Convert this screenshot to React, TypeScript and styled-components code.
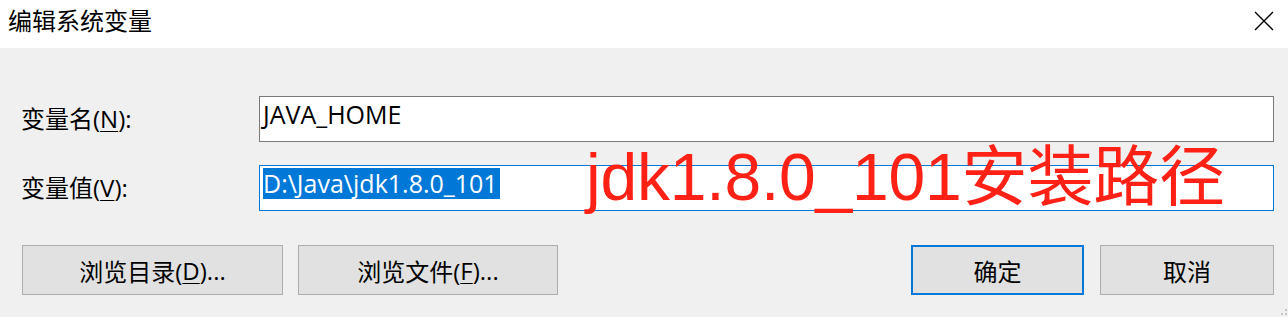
import styled, { createGlobalStyle } from "styled-components";

const GlobalStyle = createGlobalStyle`
  html, body {
    margin: 0;
    padding: 0;
    background: #f0f0f0;
  }
  body {
    font-family: "Open Sans", "Noto Sans CJK SC", sans-serif;
    color: #000;
  }
`;

const Dialog = styled.div`
  position: relative;
  width: 1288px;
  height: 317px;
  display: flex;
  flex-direction: column;
  background: #f0f0f0;
  overflow: hidden;
`;

const TitleBar = styled.div`
  height: 48px;
  box-sizing: border-box;
  padding: 0 14px 6px 8px;
  display: flex;
  align-items: center;
  justify-content: space-between;
  background: #ffffff;
`;

const Title = styled.span`
  font-size: 24px;
  line-height: 30px;
`;

const CloseButton = styled.div`
  width: 20px;
  height: 20px;
  display: flex;
`;

const Body = styled.div`
  flex: 1;
  display: flex;
  flex-direction: column;
  padding: 48px 14px 0 22px;
`;

const Fields = styled.div`
  display: grid;
  grid-template-columns: 237px 1fr;
  row-gap: 23px;
  align-items: center;
`;

const Label = styled.label`
  font-size: 24px;
  line-height: 30px;
  margin-left: -1px;

  u {
    text-decoration: underline;
    text-underline-offset: 3px;
    text-decoration-thickness: 1px;
  }
`;

const Field = styled.div<{ $focused?: boolean }>`
  height: 46px;
  box-sizing: border-box;
  border: 1px solid ${(p) => (p.$focused ? "#0078d7" : "#7a7a7a")};
  background: #ffffff;
  padding: 2px 3px;
  font-size: 25px;
  line-height: 31px;
  white-space: nowrap;
`;

const Selected = styled.span`
  display: inline-block;
  background: #0078d7;
  color: #ffffff;
  padding-right: 2px;
`;

const ButtonRow = styled.div`
  display: flex;
  margin-top: 34px;
`;

const Group = styled.div<{ $gap: number }>`
  display: flex;
  gap: ${(p) => p.$gap}px;
`;

const Spacer = styled.div`
  flex: 1;
`;

const Button = styled.button<{ $width: number; $default?: boolean }>`
  width: ${(p) => p.$width}px;
  height: 50px;
  box-sizing: border-box;
  border: ${(p) => (p.$default ? "2px solid #0078d7" : "1px solid #adadad")};
  background: #e1e1e1;
  font-family: "Open Sans", "Noto Sans CJK SC", sans-serif;
  font-size: 24px;
  color: #000;
  padding: 0;
  display: flex;
  align-items: center;
  justify-content: center;

  u {
    text-underline-offset: 3px;
    text-decoration-thickness: 1px;
  }
`;

const Note = styled.div`
  position: absolute;
  left: 586px;
  top: 144px;
  font-family: "Liberation Sans", "Noto Sans CJK SC", sans-serif;
  font-size: 66px;
  line-height: 66px;
  letter-spacing: -0.2px;
  color: #ff2016;
  white-space: nowrap;
  pointer-events: none;
`;

const Grip = styled.svg`
  position: absolute;
  right: 0;
  bottom: 0;
`;

const App = () => {
  return (
    <>
      <GlobalStyle />
      <Dialog>
        <TitleBar>
          <Title>编辑系统变量</Title>
          <CloseButton>
            <svg width="20" height="20" viewBox="0 0 20 20">
              <path d="M1 1 L19 19 M19 1 L1 19" stroke="#000" strokeWidth="1.4" fill="none" />
            </svg>
          </CloseButton>
        </TitleBar>
        <Body>
          <Fields>
            <Label>
              变量名(<u>N</u>):
            </Label>
            <Field>JAVA_HOME</Field>
            <Label>
              变量值(<u>V</u>):
            </Label>
            <Field $focused>
              <Selected>D:\Java\jdk1.8.0_101</Selected>
            </Field>
          </Fields>
          <ButtonRow>
            <Group $gap={15}>
              <Button $width={261}>
                浏览目录(<u>D</u>)...
              </Button>
              <Button $width={260}>
                浏览文件(<u>F</u>)...
              </Button>
            </Group>
            <Spacer />
            <Group $gap={16}>
              <Button $width={173} $default>
                确定
              </Button>
              <Button $width={174}>取消</Button>
            </Group>
          </ButtonRow>
        </Body>
        <Note>jdk1.8.0_101安装路径</Note>
        <Grip width="10" height="8" viewBox="0 0 10 8">
          <rect x="7" y="0" width="2" height="2" fill="#c4c4c4" />
          <rect x="3" y="4" width="2" height="2" fill="#c4c4c4" />
          <rect x="7" y="4" width="2" height="2" fill="#c4c4c4" />
        </Grip>
      </Dialog>
    </>
  );
};

export default App;
